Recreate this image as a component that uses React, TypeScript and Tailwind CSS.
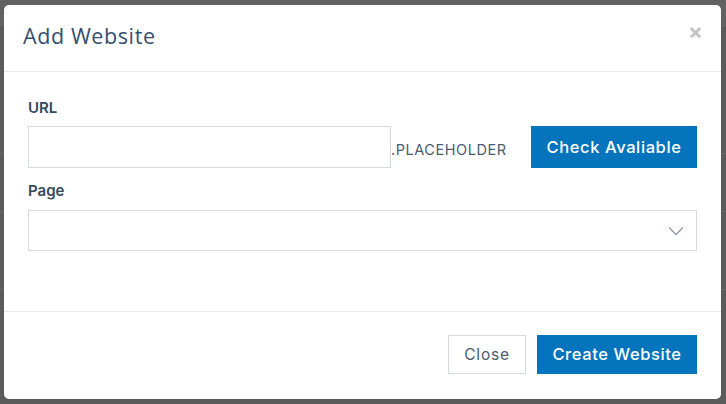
const body = { fontFamily: 'Inter, "Open Sans", sans-serif' };
const heading = { fontFamily: '"Open Sans", Inter, sans-serif' };

const App = () => {
  return (
    <div className="relative w-[726px] h-[404px] overflow-hidden bg-[#5b5b5b]" style={body}>
      {/* page behind the backdrop */}
      <div className="flex flex-col">
        <div className="h-[28px] bg-[#626262] border-b border-[#545454]" />
        <div className="h-[126px] border-b border-[#6a6a6a]" />
        <div className="h-[58px] border-b border-[#6a6a6a]" />
        <div className="h-[78px] border-b border-[#6a6a6a]" />
      </div>

      {/* modal */}
      <div className="absolute inset-0 pt-[5px] pl-[4px] pr-[5px]">
        <div className="flex flex-col w-[717px] h-[394px] bg-white rounded-[5px]">
          <div className="flex items-center justify-between h-[67px] pl-[19px] pr-5 border-b border-[#e4e6ea]">
            <h2 className="-mt-[3px] text-[21.5px] text-[#35506f] tracking-[0.6px]" style={heading}>
              Add Website
            </h2>
            <button className="text-[#c4c4c4] text-[22px] leading-none font-bold -mt-[14px] -mr-[2px]">
              ×
            </button>
          </div>

          <div className="flex flex-col h-[239px] px-6 pt-[26px]">
            <label className="text-[15px] font-semibold text-[#34495e] leading-[20px] mb-[8px]">
              URL
            </label>
            <div className="flex items-center">
              <input className="w-[363px] h-[42px] border border-[#d6dae0] outline-none" />
              <span className="mt-[5px] text-[14.5px] text-[#4b5b70] tracking-[0.55px]">.PLACEHOLDER</span>
              <button className="ml-auto w-[166px] h-[42px] bg-[#0474bc] text-white text-[16.5px] font-medium tracking-[0.6px]">
                Check Avaliable
              </button>
            </div>
            <label className="mt-[13px] text-[15px] font-semibold text-[#34495e] leading-[20px] mb-[9px]">
              Page
            </label>
            <div className="flex items-center justify-end h-[41px] border border-[#d6dae0] pr-[12px]">
              <svg width="16" height="10" viewBox="0 0 16 10" fill="none">
                <polyline points="1,1.5 8,8.5 15,1.5" stroke="#8f98a8" strokeWidth="1.3" />
              </svg>
            </div>
          </div>

          <div className="flex items-start justify-end gap-[11px] h-[88px] px-6 pt-[23px] border-t border-[#e4e6ea]">
            <button className="w-[78px] h-[39px] border border-[#d6dae0] text-[15.5px] text-[#4b5b70] tracking-[0.8px]">
              Close
            </button>
            <button className="w-[160px] h-[39px] bg-[#0474bc] text-white text-[16.5px] font-medium tracking-[0.6px]">
              Create Website
            </button>
          </div>
        </div>
      </div>
    </div>
  );
};

export default App;
